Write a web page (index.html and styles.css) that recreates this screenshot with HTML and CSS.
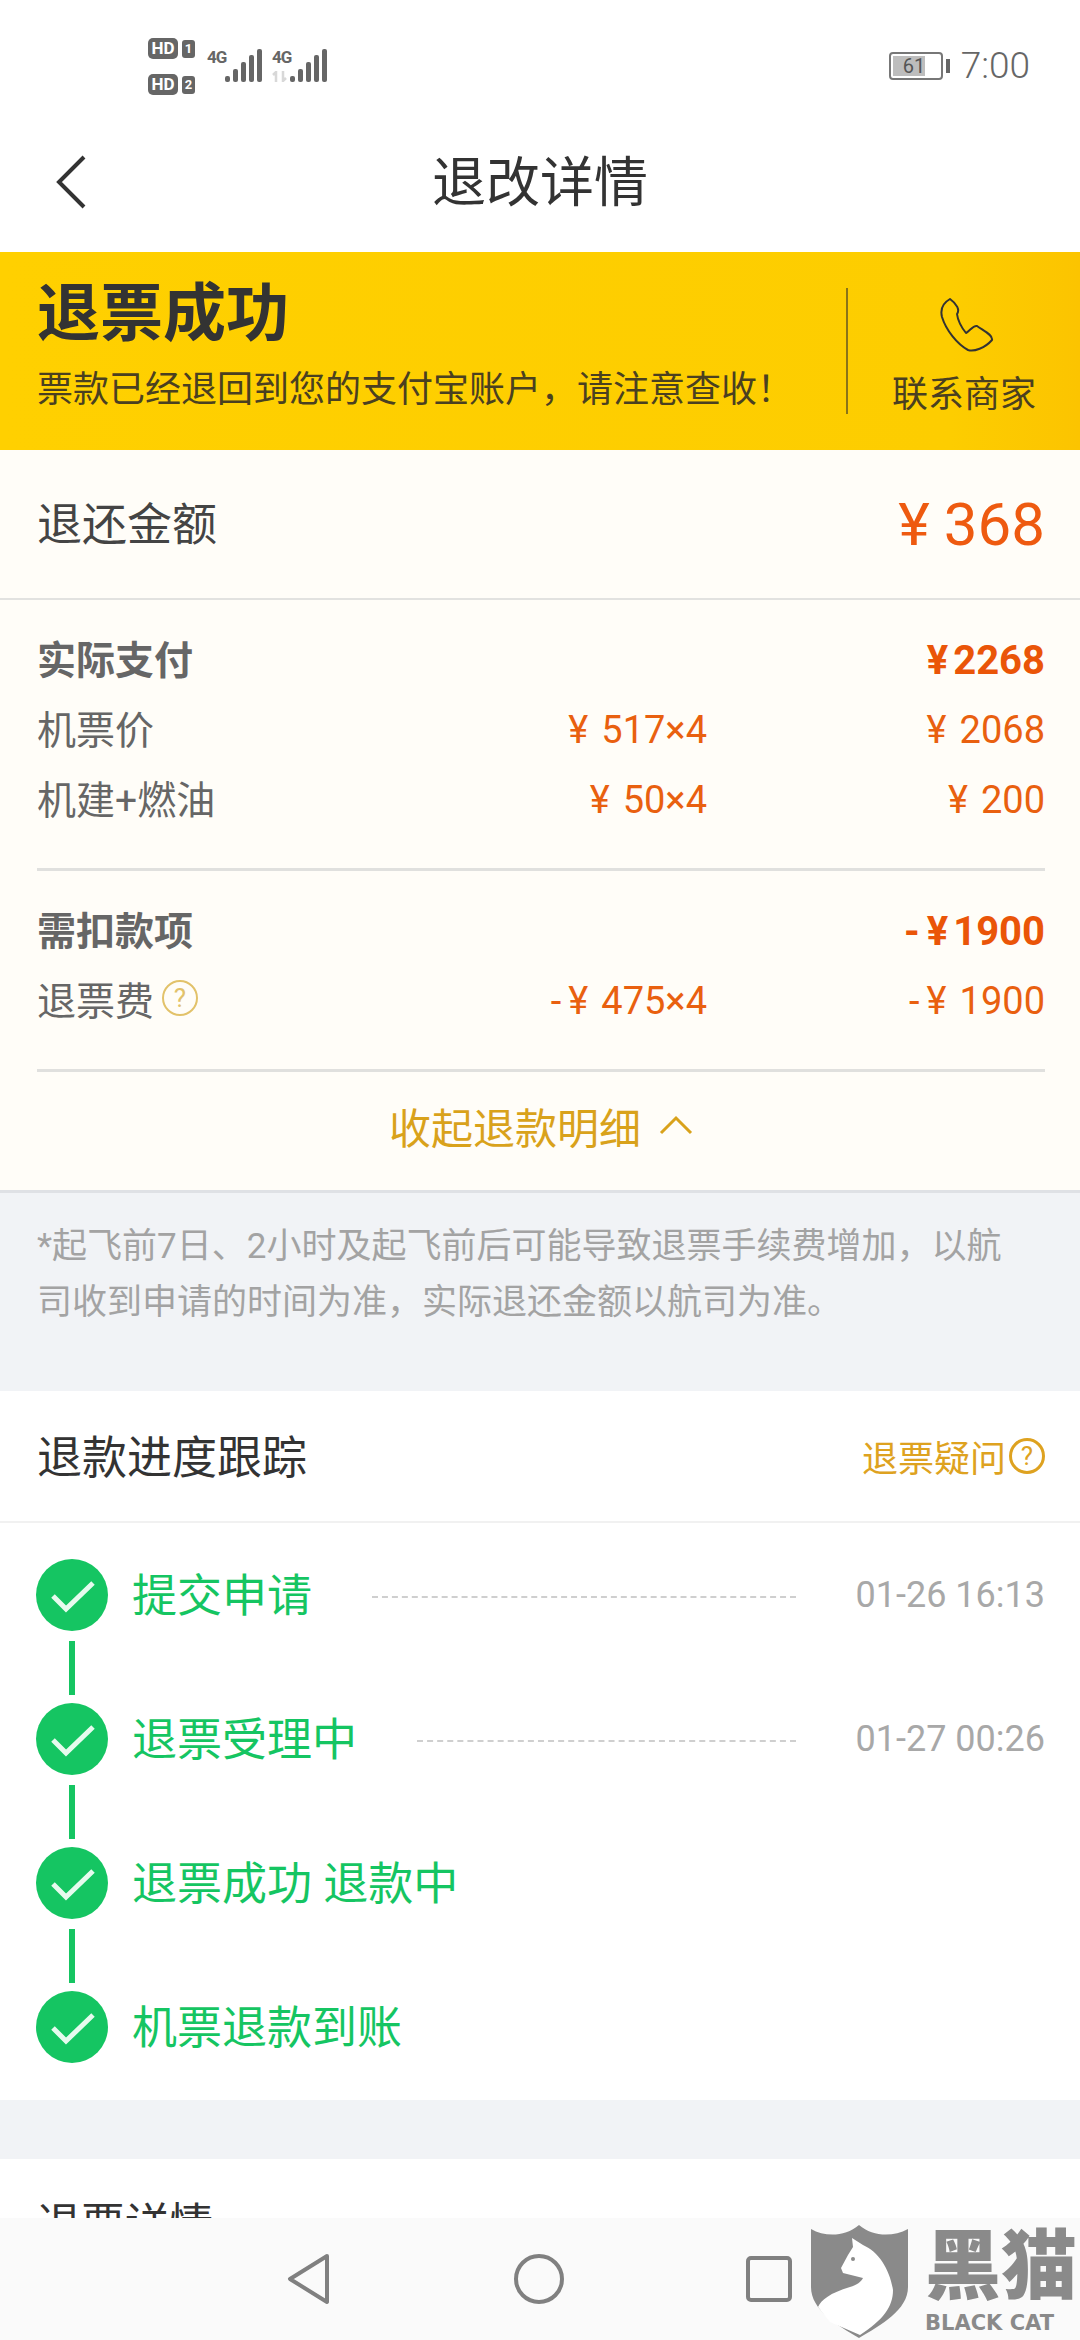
FILE: index.html
```html
<!DOCTYPE html>
<html lang="zh-CN">
<head>
    <meta charset="UTF-8">
    <meta name="viewport" content="width=device-width, initial-scale=1.0">
    <title>退改详情</title>
    <link rel="stylesheet" href="styles.css">
</head>
<body>
<div class="page">
    <div class="status">
        <div class="hd-col">
            <div class="hd-line"><span class="hd">HD</span><span class="sim">1</span></div>
            <div class="hd-line"><span class="hd">HD</span><span class="sim">2</span></div>
        </div>
        <div class="signal">
            <span class="net">4G</span>
            <div class="bars"><i class="b1"></i><i class="b2"></i><i class="b3"></i><i class="b4"></i><i class="b5"></i></div>
        </div>
        <div class="signal">
            <span class="net">4G
                <svg class="updown" width="16" height="11" viewBox="0 0 16 11"><path d="M4 11 V1 L1 4 M11 0 V10 L14 7" fill="none" stroke="#d8d8d8" stroke-width="2.5"/></svg>
            </span>
            <div class="bars"><i class="b1"></i><i class="b2"></i><i class="b3"></i><i class="b4"></i><i class="b5"></i></div>
        </div>
        <div class="status-right">
            <div class="battery"><div class="battery-fill"></div><span class="battery-num">61</span></div>
            <div class="battery-tip"></div>
            <span class="clock">7:00</span>
        </div>
    </div>

    <div class="nav">
        <svg class="back" width="32" height="54" viewBox="0 0 32 54"><path d="M29 2 L4 27 L29 52" fill="none" stroke="#333" stroke-width="4"/></svg>
        <div class="nav-title">退改详情</div>
    </div>

    <div class="banner">
        <div class="banner-text">
            <div class="banner-title">退票成功</div>
            <div class="banner-sub">票款已经退回到您的支付宝账户&#65292;请注意查收&#65281;</div>
        </div>
        <div class="contact">
            <svg width="54" height="54" viewBox="0 0 54 54"><path d="M10 1 C3 5 0 11 2 19 C6 32 17 46 28 52 C34 54 45 50 52 42 C53 37 44 33 37 28 C33 27 30 33 26 35 C22 30 18 24 17 16 C20 12 17 6 10 1Z" fill="none" stroke="#333" stroke-width="2" stroke-linejoin="round"/></svg>
            <div class="contact-label">联系商家</div>
        </div>
    </div>

    <div class="refund">
        <span class="refund-label">退还金额</span>
        <span class="refund-price"><span class="yen">¥</span>368</span>
    </div>

    <div class="detail">
        <div class="row row-bold"><span class="row-name">实际支付</span><span class="row-mid"></span><span class="row-total"><span class="y">¥</span>2268</span></div>
        <div class="row"><span class="row-name">机票价</span><span class="row-mid"><span class="y">¥</span>517×4</span><span class="row-total"><span class="y">¥</span>2068</span></div>
        <div class="row"><span class="row-name">机建+燃油</span><span class="row-mid"><span class="y">¥</span>50×4</span><span class="row-total"><span class="y">¥</span>200</span></div>
        <div class="line line-a"></div>
        <div class="row row-bold"><span class="row-name">需扣款项</span><span class="row-mid"></span><span class="row-total"><span class="minus">-</span><span class="y">¥</span>1900</span></div>
        <div class="row"><span class="row-name">退票费<span class="help">?</span></span><span class="row-mid"><span class="minus">-</span><span class="y">¥</span>475×4</span><span class="row-total"><span class="minus">-</span><span class="y">¥</span>1900</span></div>
        <div class="line line-b"></div>
        <div class="toggle">收起退款明细
            <svg width="34" height="20" viewBox="0 0 34 20"><path d="M2 18 L17 3 L32 18" fill="none" stroke="#d9a21b" stroke-width="3"/></svg>
        </div>
    </div>

    <div class="note">*起飞前7日、2小时及起飞前后可能导致退票手续费增加&#65292;以航司收到申请的时间为准&#65292;实际退还金额以航司为准。</div>

    <div class="track-head">
        <span class="track-title">退款进度跟踪</span>
        <span class="track-help">退票疑问<span class="help help-big">?</span></span>
    </div>

    <div class="track">
        <div class="step">
            <div class="dot"><svg width="72" height="72" viewBox="0 0 72 72"><path d="M17 37 L30 50 L57 24" fill="none" stroke="#e6fbee" stroke-width="5"/></svg></div>
            <span class="step-name">提交申请</span><span class="dash"></span><span class="step-time">01-26 16:13</span>
        </div>
        <div class="link"></div>
        <div class="step">
            <div class="dot"><svg width="72" height="72" viewBox="0 0 72 72"><path d="M17 37 L30 50 L57 24" fill="none" stroke="#e6fbee" stroke-width="5"/></svg></div>
            <span class="step-name">退票受理中</span><span class="dash"></span><span class="step-time">01-27 00:26</span>
        </div>
        <div class="link"></div>
        <div class="step">
            <div class="dot"><svg width="72" height="72" viewBox="0 0 72 72"><path d="M17 37 L30 50 L57 24" fill="none" stroke="#e6fbee" stroke-width="5"/></svg></div>
            <span class="step-name">退票成功 退款中</span>
        </div>
        <div class="link"></div>
        <div class="step">
            <div class="dot"><svg width="72" height="72" viewBox="0 0 72 72"><path d="M17 37 L30 50 L57 24" fill="none" stroke="#e6fbee" stroke-width="5"/></svg></div>
            <span class="step-name">机票退款到账</span>
        </div>
    </div>

    <div class="gap"></div>
    <div class="more">退票详情</div>

    <!-- system nav sits on top of the scrolled page -->
    <div class="sysnav">
        <svg width="46" height="54" viewBox="0 0 46 54"><path d="M41 4 L4 27 L41 50Z" fill="none" stroke="#808080" stroke-width="4" stroke-linejoin="round"/></svg>
        <svg width="52" height="52" viewBox="0 0 52 52"><circle cx="26" cy="26" r="23" fill="none" stroke="#808080" stroke-width="4"/></svg>
        <svg width="46" height="46" viewBox="0 0 46 46"><rect x="2" y="2" width="42" height="42" rx="3" fill="none" stroke="#808080" stroke-width="4"/></svg>
    </div>

    <!-- watermark -->
    <div class="mark">
        <svg width="98" height="114" viewBox="0 0 98 114">
            <path d="M0 4 C14 12 34 12 48 0 C62 12 82 12 97 4 L97 62 C97 85 70 100 48 113 C26 100 0 85 0 62Z" fill="#8a8a8a"/>
            <path d="M41 13 L52 20 C68 27 79 45 82 65 C82 82 72 95 49 110 L19 97 L7 82 C10 75 19 68 39 62 C46 60 50 57 52 53 L32 48 L30 43 L37 30 L42 22Z" fill="#fff"/>
            <circle cx="42" cy="34" r="2" fill="#8a8a8a"/>
        </svg>
        <div class="mark-text">
            <div class="mark-cn">黑猫</div>
            <div class="mark-en">BLACK CAT</div>
        </div>
    </div>
</div>
</body>
</html>
```

FILE: styles.css
```css
* {
    box-sizing: border-box;
}
body {
    margin: 0;
    background: #fff;
    font-family: Roboto, "Noto Sans CJK SC", sans-serif;
    color: #333;
}
.page {
    position: relative;
    width: 1080px;
    height: 2340px;
    overflow: hidden;
    background: #fff;
}

/* status bar */
.status {
    display: flex;
    height: 118px;
    padding: 38px 50px 0 148px;
}
.hd-col {
    width: 59px;
}
.hd-line {
    display: flex;
    align-items: center;
    height: 21px;
    margin-bottom: 15px;
}
.hd {
    width: 30px;
    height: 21px;
    border-radius: 5px;
    background: #666;
    color: #fff;
    font-size: 17px;
    font-weight: 700;
    line-height: 21px;
    text-align: center;
}
.sim {
    width: 13px;
    height: 18px;
    margin-left: 4px;
    border-radius: 3px;
    background: #666;
    color: #fff;
    font-size: 13px;
    font-weight: 700;
    line-height: 18px;
    text-align: center;
}
.signal {
    display: flex;
    width: 65px;
    height: 44px;
    padding-top: 11px;
}
.net {
    width: 18px;
    color: #666;
    font-size: 17px;
    font-weight: 700;
    line-height: 16px;
    letter-spacing: -1px;
    white-space: nowrap;
}
.updown {
    display: block;
    margin-top: 6px;
}
.bars {
    display: flex;
    align-items: flex-end;
    gap: 3px;
    height: 33px;
}
.bars i {
    display: block;
    width: 5px;
    border-radius: 2px;
    background: #666;
}
.b1 { height: 6px; }
.b2 { height: 13px; }
.b3 { height: 20px; }
.b4 { height: 27px; }
.b5 { height: 33px; }
.status-right {
    display: flex;
    align-items: center;
    height: 28px;
    margin: 14px 0 0 auto;
}
.battery {
    position: relative;
    width: 54px;
    height: 28px;
    border: 2px solid #777;
    border-radius: 4px;
    padding: 2px;
}
.battery-fill {
    width: 32px;
    height: 20px;
    background: #bdbdbd;
}
.battery-num {
    position: absolute;
    left: 12px;
    top: 0;
    color: #555;
    font-size: 20px;
    line-height: 24px;
}
.battery-tip {
    width: 4px;
    height: 14px;
    margin-left: 3px;
    background: #666;
}
.clock {
    margin-left: 11px;
    color: #666;
    font-size: 37px;
    font-weight: 300;
    line-height: 30px;
}

/* title bar */
.nav {
    position: relative;
    height: 134px;
    text-align: center;
}
.back {
    position: absolute;
    left: 55px;
    top: 37px;
}
.nav-title {
    font-size: 54px;
    line-height: 132px;
}

/* yellow banner */
.banner {
    display: flex;
    height: 198px;
    padding: 36px 0 0 37px;
    background: linear-gradient(90deg, #ffd000, #fdcd00 88%, #fcc400);
}
.banner-text {
    width: 809px;
}
.banner-title {
    font-size: 63px;
    font-weight: 700;
    line-height: 52px;
}
.banner-sub {
    margin-top: 22px;
    color: #4a4020;
    font-size: 36px;
    line-height: 56px;
}
.contact {
    width: 234px;
    height: 126px;
    border-left: 2px solid #8a7418;
    text-align: center;
}
.contact svg {
    display: block;
    margin: 10px auto 0 92px;
}
.contact-label {
    margin-top: 18px;
    color: #4a4020;
    font-size: 36px;
    line-height: 50px;
}

/* refund summary */
.refund {
    display: flex;
    justify-content: space-between;
    align-items: center;
    height: 150px;
    padding: 0 35px 0 37px;
    border-bottom: 2px solid #e2e2e0;
    background: #fffdf8;
}
.refund-label {
    margin-bottom: 6px;
    color: #444;
    font-size: 45px;
}
.refund-price {
    color: #ee5a10;
    font-size: 60px;
}
.yen {
    margin-right: 14px;
}

.detail {
    padding: 25px 35px 12px 37px;
    border-bottom: 3px solid #dfe1e5;
    background: #fffdf8;
}
.row {
    display: flex;
    align-items: center;
    height: 70px;
    color: #666;
    font-size: 39px;
}
.row-name {
    display: flex;
    align-items: center;
    width: 400px;
    padding-bottom: 6px;
}
.row-mid {
    width: 270px;
    color: #e9600f;
    text-align: right;
    font-size: 38px;
}
.row-total {
    flex: 1;
    color: #e9600f;
    text-align: right;
    font-size: 38px;
}
.y {
    margin-right: 13px;
}
.minus {
    margin-right: 7px;
}
.row-bold {
    font-weight: 700;
}
.row-bold .row-total {
    color: #ea5508;
    font-size: 40px;
}
.row-bold .y {
    margin-right: 5px;
}
.help {
    width: 36px;
    height: 36px;
    margin-left: 8px;
    border: 2px solid #e2c26a;
    border-radius: 50%;
    color: #e2c26a;
    font-size: 26px;
    line-height: 32px;
    text-align: center;
}
.line {
    height: 3px;
    background: #e0e0de;
}
.line-a {
    margin: 33px 0 25px;
}
.line-b {
    margin-top: 33px;
}
.toggle {
    display: flex;
    justify-content: center;
    align-items: center;
    height: 106px;
    color: #d9a21b;
    font-size: 42px;
}
.toggle svg {
    margin-left: 18px;
}

.note {
    height: 198px;
    padding: 26px 50px 0 37px;
    background: #f1f3f6;
    color: #a3a3a3;
    font-size: 35px;
    line-height: 56px;
}

/* progress */
.track-head {
    display: flex;
    justify-content: space-between;
    align-items: center;
    height: 132px;
    padding: 0 35px 4px 37px;
    border-bottom: 2px solid #f1f1f1;
}
.track-title {
    font-size: 45px;
}
.track-help {
    display: flex;
    align-items: center;
    margin-top: 4px;
    color: #dea220;
    font-size: 36px;
}
.help-big {
    margin-left: 3px;
    border: 3px solid #dea220;
    color: #dea220;
    line-height: 30px;
}
.track {
    padding: 36px 37px 37px 36px;
}
.step {
    display: flex;
    align-items: center;
    height: 72px;
}
.dot {
    width: 72px;
    height: 72px;
    border-radius: 50%;
    background: #15c562;
}
.step-name {
    margin-left: 24px;
    padding-bottom: 5px;
    color: #15c562;
    font-size: 45px;
}
.dash {
    flex: 1;
    margin: 4px 60px 0;
    border-top: 2px dashed #cfcfcf;
}
.step-time {
    margin-right: -2px;
    color: #a8a8a8;
    font-size: 36px;
}
.link {
    width: 6px;
    height: 54px;
    margin: 10px 0 8px 33px;
    background: #15c562;
}
.gap {
    height: 59px;
    background: #f1f3f6;
}
.more {
    padding: 36px 0 0 37px;
    font-size: 44px;
    line-height: 60px;
}

/* android nav */
.sysnav {
    position: absolute;
    left: 0;
    right: 0;
    bottom: 0;
    display: flex;
    align-items: center;
    height: 122px;
    padding: 0 0 0 286px;
    background: #fafafa;
    gap: 181px;
}
.mark {
    position: absolute;
    left: 811px;
    top: 2225px;
    display: flex;
    color: #8a8a8a;
}
.mark-text {
    width: 155px;
    margin-left: 16px;
}
.mark-cn {
    font-size: 76px;
    font-weight: 900;
    line-height: 84px;
    white-space: nowrap;
}
.mark-en {
    margin-top: 2px;
    font-family: "DejaVu Sans", sans-serif;
    font-size: 21px;
    font-weight: 700;
    line-height: 24px;
    white-space: nowrap;
}
```
